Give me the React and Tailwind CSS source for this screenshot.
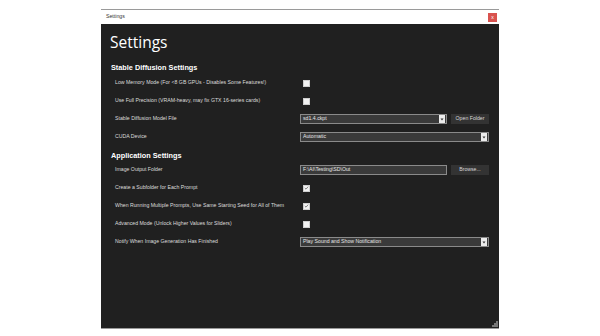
import { useState } from "react";

function Checkbox({ checked }) {
    return (
        <div className="w-[7px] h-[7px] bg-[#f2f2f2] border border-[#cfcfcf] flex items-center justify-center">
            {checked && (
                <svg width="6" height="6" viewBox="0 0 6 6">
                    <path d="M1 3 L2.4 4.4 L5 1.4" stroke="#6b6b6b" strokeWidth="1" fill="none" />
                </svg>
            )}
        </div>
    );
}

function Dropdown({ value, width }) {
    return (
        <div className={`${width} h-[10px] bg-[#3a3a3a] border border-[#8a8a8a] flex items-center justify-between`}>
            <span className="pl-[2px] text-[5.2px] text-[#e6e6e6] leading-none">{value}</span>
            <div className="w-[6px] h-[8px] mr-[1px] bg-[#ececec] flex items-center justify-center">
                <svg width="4" height="3" viewBox="0 0 4 3">
                    <path d="M0.5 0.5 L3.5 0.5 L2 2.5 Z" fill="#333" />
                </svg>
            </div>
        </div>
    );
}

function SmallButton({ children }) {
    return (
        <div className="w-[38px] h-[10px] bg-[#333333] flex items-center justify-center text-[5.2px] text-[#d8d8d8] leading-none">
            {children}
        </div>
    );
}

function Row({ label, children }) {
    return (
        <div className="flex items-center h-[18px]">
            <div className="w-[187px] shrink-0 pl-[2px] text-[5.2px] text-[#dcdcdc] leading-none whitespace-nowrap">{label}</div>
            <div className="flex items-center gap-[4px]">{children}</div>
        </div>
    );
}

export default function App() {
    const [settings] = useState({
        lowMemory: false,
        fullPrecision: false,
        subfolder: true,
        sameSeed: true,
        advanced: false,
    });

    return (
        <div className="w-[600px] h-[336px] bg-white flex justify-center pt-[9px]" style={{ fontFamily: "'Liberation Sans', Arial, sans-serif" }}>
            <div className="w-[398px] h-[320px] flex flex-col border-t border-[#9a9a9a]">
                {/* Title bar */}
                <div className="h-[14px] bg-white flex items-center justify-between pl-[5px] pr-[2px]">
                    <span className="text-[5.2px] text-[#333] leading-none">Settings</span>
                    <div className="w-[9px] h-[9px] bg-[#d9534f] flex items-center justify-center">
                        <span className="text-[5px] text-white leading-none">x</span>
                    </div>
                </div>

                {/* Body */}
                <div className="flex-1 bg-[#202020] border-b border-[#9a9a9a] pl-[9px] pt-[6px] relative">
                    <h1 className="text-[15.5px] text-white leading-none h-[26px] flex items-center" style={{ fontFamily: "'Open Sans', sans-serif" }}>
                        Settings
                    </h1>

                    <div className="pl-[1px] mt-[7px] text-[7.3px] font-bold text-white leading-none h-[10px] flex items-center">Stable Diffusion Settings</div>
                    <div className="pl-[3px] mt-[1px]">
                        <Row label="Low Memory Mode (For <8 GB GPUs - Disables Some Features!)">
                            <div className="pl-[3px]"><Checkbox checked={settings.lowMemory} /></div>
                        </Row>
                        <Row label="Use Full Precision (VRAM-heavy, may fix GTX 16-series cards)">
                            <div className="pl-[3px]"><Checkbox checked={settings.fullPrecision} /></div>
                        </Row>
                        <Row label="Stable Diffusion Model File">
                            <Dropdown value="sd1.4.ckpt" width="w-[147px]" />
                            <SmallButton>Open Folder</SmallButton>
                        </Row>
                        <Row label="CUDA Device">
                            <Dropdown value="Automatic" width="w-[189px]" />
                        </Row>
                    </div>

                    <div className="pl-[1px] mt-[5px] text-[7.3px] font-bold text-white leading-none h-[10px] flex items-center">Application Settings</div>
                    <div className="pl-[3px]">
                        <Row label="Image Output Folder">
                            <div className="w-[147px] h-[10px] bg-[#3a3a3a] border border-[#8a8a8a] flex items-center">
                                <span className="pl-[2px] text-[5.2px] text-[#e6e6e6] leading-none">F:\AI\Testing\SD\Out</span>
                            </div>
                            <SmallButton>Browse...</SmallButton>
                        </Row>
                        <Row label="Create a Subfolder for Each Prompt">
                            <div className="pl-[3px]"><Checkbox checked={settings.subfolder} /></div>
                        </Row>
                        <Row label="When Running Multiple Prompts, Use Same Starting Seed for All of Them">
                            <div className="pl-[3px]"><Checkbox checked={settings.sameSeed} /></div>
                        </Row>
                        <Row label="Advanced Mode (Unlock Higher Values for Sliders)">
                            <div className="pl-[3px]"><Checkbox checked={settings.advanced} /></div>
                        </Row>
                        <Row label="Notify When Image Generation Has Finished">
                            <Dropdown value="Play Sound and Show Notification" width="w-[189px]" />
                        </Row>
                    </div>

                    {/* Resize grip */}
                    <svg className="absolute right-[1px] bottom-[1px]" width="6" height="6" viewBox="0 0 6 6">
                        <rect x="4" y="0" width="2" height="2" fill="#777" />
                        <rect x="2" y="2" width="2" height="2" fill="#777" />
                        <rect x="4" y="2" width="2" height="2" fill="#777" />
                        <rect x="0" y="4" width="2" height="2" fill="#777" />
                        <rect x="2" y="4" width="2" height="2" fill="#777" />
                        <rect x="4" y="4" width="2" height="2" fill="#777" />
                    </svg>
                </div>
            </div>
        </div>
    );
}
